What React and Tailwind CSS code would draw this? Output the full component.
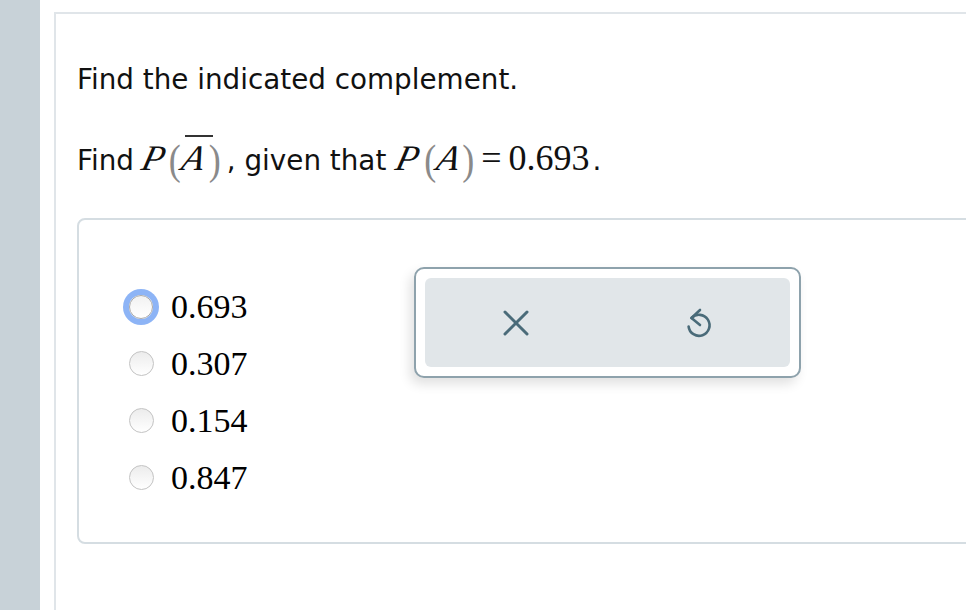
import React from 'react'

const choices = ['0.693', '0.307', '0.154', '0.847']

function Paren({ children }) {
  return (
    <span className="inline-block scale-y-[1.18] translate-y-[2px] text-[#8a8a8a]">{children}</span>
  )
}

function Var({ children }) {
  return <span className="inline-block italic -skew-x-[14deg]">{children}</span>
}

function Radio({ selected }) {
  if (selected) {
    return (
      <span className="block w-[24px] h-[24px] rounded-full bg-gradient-to-b from-[#f2f2f2] to-white border border-[#a9a9a9] shadow-[0_0_0_6px_#8db4f6]" />
    )
  }
  return (
    <span className="block w-[25px] h-[25px] rounded-full bg-gradient-to-b from-[#ececec] to-white border border-[#c3c3c3]" />
  )
}

export default function App() {
  return (
    <div className="flex h-[610px] w-[966px] overflow-hidden bg-white">
      {/* left rail */}
      <div className="w-[40px] shrink-0 bg-[#c8d2d8]" />

      <div className="pl-[14px] pt-[12px]">
        <div
          className="w-[1000px] h-[700px] border-t-2 border-l-2 border-[#e0e5e9] pl-[21px] pt-[50px] text-[#111]"
          style={{ fontFamily: '"DejaVu Sans", Verdana, sans-serif' }}
        >
          <div className="text-[27.8px] leading-[32px]">Find the indicated complement.</div>

          {/* question line */}
          <div className="mt-[40px] h-[44px] text-[27.8px] leading-[44px] whitespace-nowrap">
            Find{' '}
            <span className="font-['Liberation_Serif',serif] text-[36px] mr-[6px]">
              <Var>P</Var>
              <span className="ml-[4px]"><Paren>(</Paren></span>
              <span className="relative inline-block ml-[2px]">
                <Var>A</Var>
                <span className="absolute left-[2px] right-[-8px] top-[-1px] h-[2px] bg-[#333]" />
              </span>
              <span className="ml-[4px]"><Paren>)</Paren></span>
            </span>
            , given that{' '}
            <span className="font-['Liberation_Serif',serif] text-[36px] ml-[2px]">
              <Var>P</Var>
              <span className="ml-[5px]"><Paren>(</Paren></span>
              <span className="ml-[2px]"><Var>A</Var></span>
              <span className="ml-[2px]"><Paren>)</Paren></span>
              <span className="mx-[7px]">=</span>
              0.693
            </span>
            <span className="ml-[3px]">.</span>
          </div>

          {/* answer area */}
          <div className="mt-[38px] w-[1000px] h-[326px] border-2 border-[#d5dde2] rounded-[8px] pl-[44px] pt-[58px] flex items-start">
            <div className="w-[291px]">
              {choices.map((c, i) => (
                <div key={c} className="flex items-center h-[57px]">
                  <div className="w-[36px] h-[36px] flex items-center justify-center">
                    <Radio selected={i === 0} />
                  </div>
                  <span className="ml-[12px] font-['Liberation_Serif',serif] text-[34px] leading-none text-black">
                    {c}
                  </span>
                </div>
              ))}
            </div>

            <div className="mt-[-11px] w-[387px] h-[111px] rounded-[10px] border-2 border-[#8ea2ac] bg-white p-[9px] shadow-[-4px_6px_12px_rgba(0,0,0,0.12)]">
              <div className="h-full rounded-[6px] bg-[#e1e6e9] flex">
                <button className="flex-1 flex items-center justify-center">
                  <svg width="26" height="26" viewBox="0 0 26 26" fill="none" stroke="#4a6b79" strokeWidth="3" strokeLinecap="round">
                    <line x1="2" y1="2" x2="24" y2="24" />
                    <line x1="24" y1="2" x2="2" y2="24" />
                  </svg>
                </button>
                <button className="flex-1 flex items-center justify-center">
                  <svg width="30" height="32" viewBox="0 0 30 32" fill="none" stroke="#4a6b79" strokeWidth="2.6" strokeLinecap="round" strokeLinejoin="round">
                    <path d="M7.5 11 A10.5 10.5 0 1 1 4.6 19.5" />
                    <path d="M16 3 L7.5 11 L16 18" />
                  </svg>
                </button>
              </div>
            </div>
          </div>
        </div>
      </div>
    </div>
  )
}
